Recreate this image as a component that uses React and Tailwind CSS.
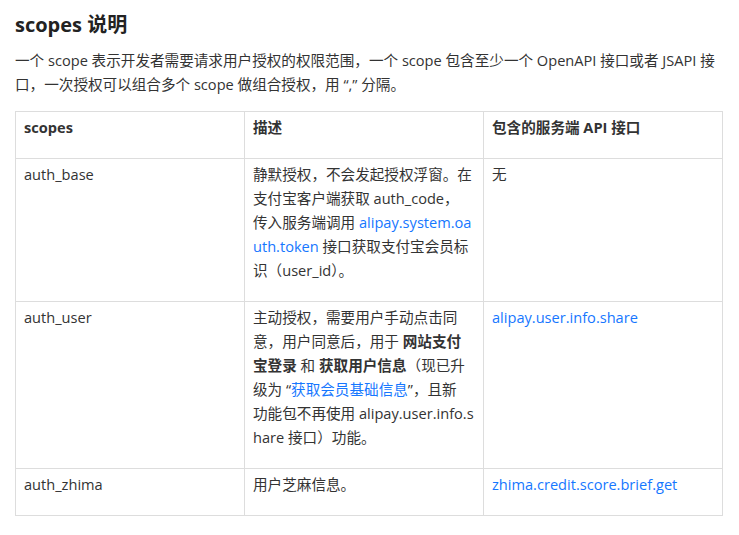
export default function App() {
  const link = "text-[#1677ff]";
  const td = "border border-[#dddddd] align-top px-2 pt-[3px] pb-[19px] text-left";
  return (
    <div className="w-[739px] h-[535px] bg-white text-[#333333] font-['Open_Sans','Noto_Sans_CJK_SC',sans-serif] text-[14.6px] leading-[24px] overflow-hidden">
      <div className="pl-[15px] pt-[12px]">
        <h2 className="text-[20px] leading-[26px] font-bold text-[#222222]">scopes 说明</h2>
        <p className="mt-[10px] whitespace-nowrap">
          一个 scope 表示开发者需要请求用户授权的权限范围，一个 scope 包含至少一个 OpenAPI 接口或者 JSAPI 接<br />
          口，一次授权可以组合多个 scope 做组合授权，用 “,” 分隔。
        </p>
        <table className="mt-[15px] border-collapse table-fixed w-[707px]">
          <colgroup>
            <col className="w-[229px]" />
            <col className="w-[239px]" />
            <col className="w-[239px]" />
          </colgroup>
          <thead>
            <tr className="h-[47px]">
              <th className={td + " font-bold"}>scopes</th>
              <th className={td + " font-bold"}>描述</th>
              <th className={td + " font-bold"}>包含的服务端 API 接口</th>
            </tr>
          </thead>
          <tbody>
            <tr className="h-[143px]">
              <td className={td}>auth_base</td>
              <td className={td + " whitespace-nowrap"}>
                静默授权，不会发起授权浮窗。在<br />
                支付宝客户端获取 auth_code，<br />
                传入服务端调用 <span className={link}>alipay.system.oa<br />uth.token</span> 接口获取支付宝会员标<br />
                识（user_id）。
              </td>
              <td className={td}>无</td>
            </tr>
            <tr className="h-[167px]">
              <td className={td}>auth_user</td>
              <td className={td + " whitespace-nowrap"}>
                主动授权，需要用户手动点击同<br />
                意，用户同意后，用于 <b>网站支付</b><br />
                <b>宝登录</b> 和 <b>获取用户信息</b>（现已升<br />
                级为 “<span className={link}>获取会员基础信息</span>”，且新<br />
                功能包不再使用 alipay.user.info.s<br />
                hare 接口）功能。
              </td>
              <td className={td}><span className={link}>alipay.user.info.share</span></td>
            </tr>
            <tr className="h-[47px]">
              <td className={td}>auth_zhima</td>
              <td className={td}>用户芝麻信息。</td>
              <td className={td}><span className={link}>zhima.credit.score.brief.get</span></td>
            </tr>
          </tbody>
        </table>
      </div>
    </div>
  );
}
